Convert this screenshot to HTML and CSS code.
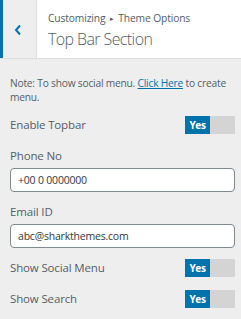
FILE: index.html
```html
<!DOCTYPE html>
<html lang="en">
<head>
    <meta charset="UTF-8">
    <meta name="viewport" content="width=device-width, initial-scale=1.0">
    <title>Top Bar Section</title>
    <link rel="stylesheet" href="styles.css">
</head>
<body>
    <div class="section-header">
        <button class="back-btn" aria-label="Back">
            <svg width="8" height="12" viewBox="0 0 8 12"><path d="M6 1.5 L2 6 L6 10.5" fill="none" stroke="#0073aa" stroke-width="2"/></svg>
        </button>
        <div class="section-title">
            <div class="crumb">Customizing <span class="arrow">&#9656;</span> Theme Options</div>
            <h3>Top Bar Section</h3>
        </div>
    </div>

    <div class="controls">
        <p class="note">Note: To show social menu. <a href="#">Click Here</a> to create menu.</p>

        <div class="control toggle-row">
            <span class="label">Enable Topbar</span>
            <span class="switch"><span class="on">Yes</span><span class="off"></span></span>
        </div>

        <div class="control">
            <label class="label" for="phone">Phone No</label>
            <input type="text" id="phone" value="+00 0 0000000">
        </div>

        <div class="control">
            <label class="label" for="email">Email ID</label>
            <input type="text" id="email" value="abc@sharkthemes.com">
        </div>

        <div class="control toggle-row">
            <span class="label">Show Social Menu</span>
            <span class="switch"><span class="on">Yes</span><span class="off"></span></span>
        </div>

        <div class="control toggle-row">
            <span class="label">Show Search</span>
            <span class="switch"><span class="on">Yes</span><span class="off"></span></span>
        </div>
    </div>
</body>
</html>
```

FILE: styles.css
```css
body {
    font-family: "Open Sans", "Noto Sans", sans-serif;
    background-color: #eee;
    margin: 0;
    color: #555d66;
}
.section-header {
    display: flex;
    height: 58px;
    background-color: #fff;
    border-bottom: 1px solid #ddd;
}
.back-btn {
    width: 37px;
    padding: 1px 4px 0 0;
    background-color: #eee;
    border: none;
    border-left: 3px solid #0073aa;
    border-right: 1px solid #ddd;
    display: flex;
    align-items: center;
    justify-content: center;
}
.section-title {
    padding: 10px 0 0 11px;
}
.crumb {
    font-size: 10.3px;
    line-height: 16px;
    letter-spacing: -0.15px;
    color: #555d66;
}
.crumb .arrow {
    font-size: 7px;
    vertical-align: 1px;
    padding: 0 2px;
}
.section-title h3 {
    margin: 0;
    font-size: 16px;
    font-weight: 300;
    line-height: 24px;
    letter-spacing: -0.6px;
    color: #555d66;
}
.controls {
    padding: 17px 6px 0 10px;
}
.note {
    margin: 0 0 12px;
    font-size: 10.2px;
    line-height: 14px;
    letter-spacing: -0.2px;
}
.note a {
    color: #0073aa;
}
.control {
    margin-bottom: 11px;
}
.control.toggle-row {
    margin-bottom: 13px;
}
.label {
    display: block;
    font-size: 11.5px;
    line-height: 18px;
    letter-spacing: -0.15px;
}
.toggle-row {
    display: flex;
    justify-content: space-between;
    align-items: center;
}
.switch {
    display: flex;
    width: 50px;
    height: 18px;
}
.switch .on {
    width: 25px;
    background-color: #0073aa;
    color: #fff;
    font-size: 10px;
    font-weight: bold;
    line-height: 18px;
    letter-spacing: -0.3px;
    text-align: center;
}
.switch .off {
    width: 25px;
    background-color: #d4d4d4;
}
input[type="text"] {
    box-sizing: border-box;
    display: block;
    width: 100%;
    height: 24px;
    margin-top: 3px;
    padding: 0 7px;
    border: 1px solid #7e8993;
    border-radius: 4px;
    font-family: inherit;
    font-size: 10.5px;
    letter-spacing: -0.2px;
    color: #32373c;
}
```
